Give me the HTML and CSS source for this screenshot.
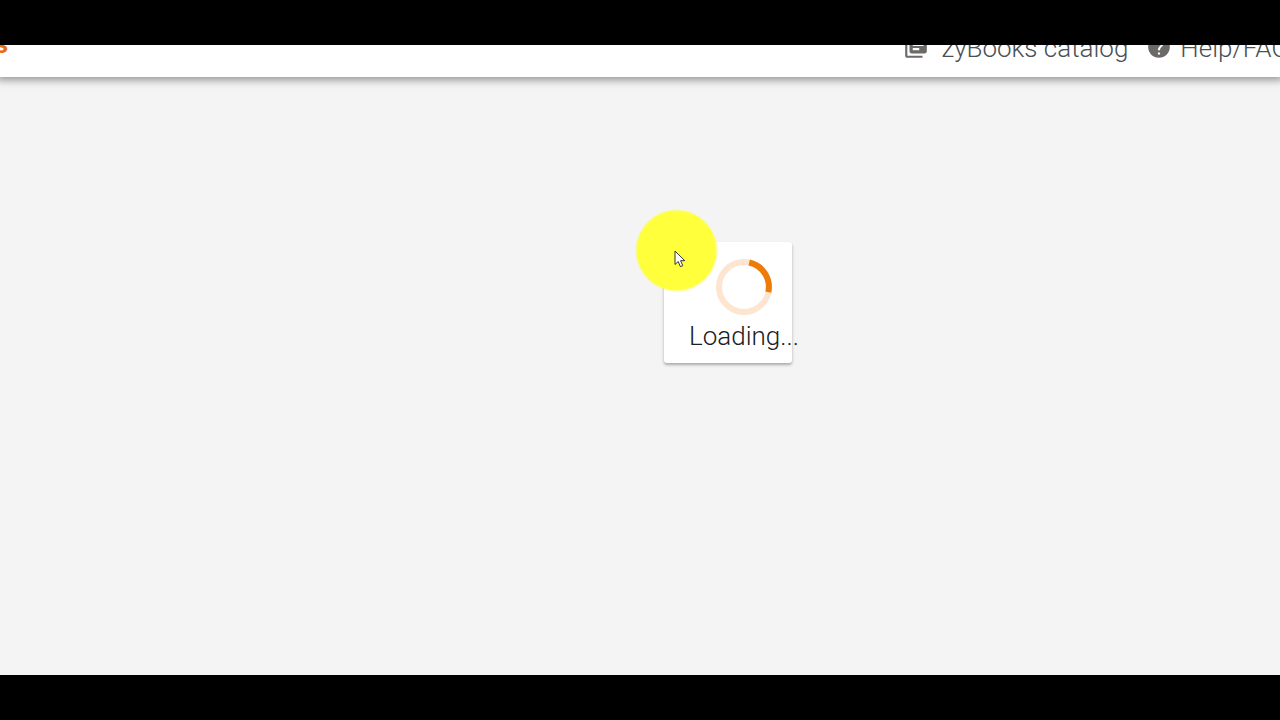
FILE: index.html
```html
<!DOCTYPE html>
<html lang="en">
<head>
<meta charset="utf-8">
<title>zyBooks</title>
<link rel="stylesheet" href="styles.css">
</head>
<body>
<div class="screen">
  <header class="topbar">
    <div class="topbar-inner">
      <a class="logo" href="#">zyBooks</a>
      <nav class="nav">
        <a class="nav-link" href="#">
          <svg class="icon" viewBox="0 0 24 24" aria-hidden="true"><path d="M4 6H2v14c0 1.100.9 2 2 2h14v-2H4V6zm16-4H8c-1.100 0-2 .9-2 2v12c0 1.100.9 2 2 2h12c1.100 0 2-.9 2-2V4c0-1.100-.9-2-2-2zm-1 9H9V9h10v2zm-4 4H9v-2h6v2zm4-8H9V5h10v2z"/></svg>
          <span>zyBooks catalog</span>
        </a>
        <a class="nav-link nav-help" href="#">
          <svg class="icon" viewBox="0 0 24 24" aria-hidden="true"><path d="M12 2C6.480 2 2 6.480 2 12s4.480 10 10 10 10-4.480 10-10S17.520 2 12 2zm1 17h-2v-2h2v2zm2.070-7.750l-.9.920C13.450 12.900 13 13.500 13 15h-2v-.5c0-1.100.45-2.100 1.170-2.830l1.240-1.260c.37-.36.590-.86.590-1.410 0-1.100-.9-2-2-2s-2 .9-2 2H8c0-2.210 1.790-4 4-4s4 1.790 4 4c0 .88-.36 1.680-.93 2.250z"/></svg>
          <span>Help/FAQ</span>
        </a>
      </nav>
    </div>
  </header>
  <main class="content">
    <div class="card" role="status">
      <svg class="spinner" viewBox="0 0 56 56" aria-hidden="true">
        <circle class="track" cx="28" cy="28" r="25"/>
        <path class="arc" d="M33.200 3.550A25 25 0 0 1 52.300 33.200"/>
      </svg>
      <span class="loading">Loading...</span>
      <div class="pointer">
        <svg class="cursor" viewBox="0 0 12 18" aria-hidden="true"><path d="M1 1v13.500l3.200-3 2.200 5.200 2.400-1-2.200-5h4.200z"/></svg>
      </div>
    </div>
  </main>
</div>
</body>
</html>
```
FILE: styles.css
```css
* { box-sizing: border-box; }

body {
  margin: 0;
  background: #000;
  font-family: Roboto, "Liberation Sans", sans-serif;
  font-size: 26px;
  font-weight: 300;
  line-height: 32px;
}

.screen {
  display: flex;
  flex-direction: column;
  min-height: 100vh;
  border-top: 45px solid #000;
  border-bottom: 45px solid #000;
  background: #f4f4f4;
  overflow: hidden;
}

.topbar {
  background: #fff;
  box-shadow: 0 0 8px 3px rgba(0, 0, 0, 0.4);
}

.topbar-inner {
  display: flex;
  align-items: flex-end;
  justify-content: space-between;
  height: 32px;
  padding-bottom: 13px;
  overflow: hidden;
}

.logo {
  display: flex;
  justify-content: flex-end;
  width: 8px;
  padding-bottom: 4px;
  color: #e86c14;
  font-weight: 700;
  text-decoration: none;
}

.nav {
  display: flex;
  gap: 18px;
  margin-right: -9px;
}

.nav-link {
  display: flex;
  align-items: flex-start;
  gap: 12px;
  color: #4a5055;
  text-decoration: none;
  white-space: nowrap;
}

.nav-help { gap: 8px; }

.icon {
  width: 26px;
  height: 30px;
  fill: #6b6a67;
}

.content {
  flex: 1;
  display: flex;
  justify-content: center;
  align-items: flex-start;
  padding: 165px 0 0 176px;
}

.card {
  position: relative;
  display: flex;
  flex-direction: column;
  align-items: center;
  gap: 5px;
  width: 128px;
  padding: 17px 0 11px 32px;
  border-radius: 3px;
  background: #fff;
  box-shadow: 0 2px 3px rgba(0, 0, 0, 0.3);
}

.spinner {
  width: 56px;
  height: 56px;
  fill: none;
  stroke-width: 6px;
}

.track { stroke: #fde5d0; }
.arc { stroke: #ee7b08; }

.loading { color: #1c2024; }

.pointer {
  position: absolute;
  top: -33px;
  left: -29px;
  display: flex;
  align-items: center;
  justify-content: center;
  width: 83px;
  height: 83px;
  padding: 16px 0 0 7px;
  border-radius: 50%;
  background: radial-gradient(closest-side, #ffff3c 94%, rgba(255, 255, 60, 0));
}

.cursor {
  width: 12px;
  height: 18px;
  fill: #fff;
  stroke: #333;
  stroke-width: 1px;
}
```
